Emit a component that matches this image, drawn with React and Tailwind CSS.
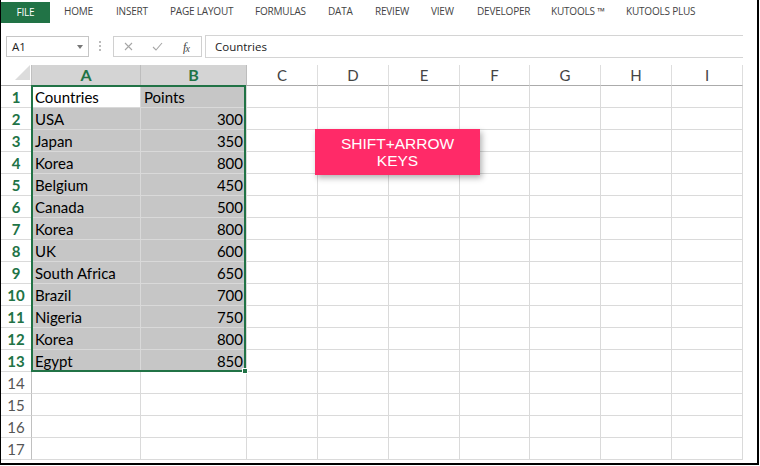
import React from 'react'

const tabs = [
  { label: 'HOME', w: 'w-[52px]' },
  { label: 'INSERT', w: 'w-[54px]' },
  { label: 'PAGE LAYOUT', w: 'w-[85px]' },
  { label: 'FORMULAS', w: 'w-[73px]' },
  { label: 'DATA', w: 'w-[47px]' },
  { label: 'REVIEW', w: 'w-[56px]' },
  { label: 'VIEW', w: 'w-[46px]' },
  { label: 'DEVELOPER', w: 'w-[74px]' },
  { label: 'KUTOOLS ™', w: 'w-[75px]' },
  { label: 'KUTOOLS PLUS', w: 'w-[80px]' },
]

const cols = ['A', 'B', 'C', 'D', 'E', 'F', 'G', 'H', 'I']

const data = [
  ['Countries', 'Points'],
  ['USA', 300],
  ['Japan', 350],
  ['Korea', 800],
  ['Belgium', 450],
  ['Canada', 500],
  ['Korea', 800],
  ['UK', 600],
  ['South Africa', 650],
  ['Brazil', 700],
  ['Nigeria', 750],
  ['Korea', 800],
  ['Egypt', 850],
]

const gridCols = 'grid grid-cols-[31px_109px_106px_71px_71px_71px_70px_71px_71px_71px]'

function Ribbon() {
  return (
    <div className="flex h-[23px] items-stretch font-['Open_Sans',sans-serif] text-[10px] tracking-[-0.2px] text-[#444]">
      <div className="w-[49px] mt-[2px] bg-[#217346] text-white flex items-center justify-center">FILE</div>
      <div className="w-[14px]" />
      {tabs.map(t => (
        <div key={t.label} className={`${t.w} flex items-center whitespace-nowrap`}>{t.label}</div>
      ))}
    </div>
  )
}

function FormulaBar() {
  return (
    <div className="mt-[12px] flex h-[23px] items-start font-['Open_Sans',sans-serif] text-[11.5px] text-[#222]">
      <div className="ml-[5px] mt-[1px] w-[83px] h-[21px] border border-[#c6c6c6] flex items-center justify-between pl-[5px] pr-[5px]">
        <span>A1</span>
        <svg width="6" height="4" viewBox="0 0 6 4"><path d="M0 0h6L3 4z" fill="#777" /></svg>
      </div>
      <div className="ml-[10px] mt-[6px] flex flex-col gap-[2px]">
        <div className="w-[2px] h-[2px] bg-[#bbb]" />
        <div className="w-[2px] h-[2px] bg-[#bbb]" />
        <div className="w-[2px] h-[2px] bg-[#bbb]" />
      </div>
      <div className="ml-[12px] mt-[1px] w-[89px] h-[21px] border border-[#d0d0d0] flex items-center">
        <div className="w-[29px] flex justify-center">
          <svg width="9" height="9" viewBox="0 0 9 9"><path d="M1 1l7 7M8 1L1 8" stroke="#a6a6a6" strokeWidth="1.1" /></svg>
        </div>
        <div className="w-[29px] flex justify-center">
          <svg width="11" height="9" viewBox="0 0 11 9"><path d="M1 5l3 3 6-7" stroke="#a6a6a6" strokeWidth="1.1" fill="none" /></svg>
        </div>
        <div className="w-[29px] flex justify-center font-['Liberation_Serif',serif] italic text-[12px] text-[#444]">
          f<span className="text-[10px] -ml-[1px] mt-[3px]">x</span>
        </div>
      </div>
      <div className="ml-[3px] w-[538px] h-[23px] border border-r-0 border-[#d4d4d4] pl-[9px] flex items-center">Countries</div>
    </div>
  )
}

function Sheet() {
  return (
    <div className="mt-[7px]">
      <div className={`${gridCols} grid-rows-[21px] h-[21px] leading-[18px]`}>
        <div className="border-r border-b border-r-[#c0c0c0] border-b-[#ababab] flex justify-end items-start pr-[1px] overflow-hidden">
          <svg width="15" height="15" viewBox="0 0 15 15"><path d="M15 0v15H0z" fill="#dcdcdc" /></svg>
        </div>
        {cols.map((c, i) => (
          <div
            key={c}
            className={
              i < 2
                ? 'bg-[#d4d4d4] border-r border-b border-r-[#bdbdbd] border-b-[#ababab] flex items-center justify-center text-[16px] font-bold text-[#217346] overflow-hidden'
                : 'border-r border-b border-r-[#dedede] border-b-[#ababab] flex items-center justify-center text-[15px] text-[#444] overflow-hidden'
            }
          >
            {c}
          </div>
        ))}
      </div>
      <div className="relative">
        {Array.from({ length: 17 }, (_, r) => {
          const row = data[r]
          const sel = r < 13
          return (
            <div key={r} className={`${gridCols} grid-rows-[22px] h-[22px] leading-[20px]`}>
              <div
                className={`border-r border-b border-r-[#c0c0c0] border-b-[#dadada] flex items-center justify-center text-[15px] overflow-hidden ${
                  sel ? 'font-bold text-[#217346]' : 'text-[#555]'
                }`}
              >
                {r + 1}
              </div>
              {cols.map((c, i) => {
                const inSel = sel && i < 2
                const bg = inSel && !(r === 0 && i === 0) ? 'bg-[#c6c6c6]' : 'bg-white'
                return (
                  <div
                    key={c}
                    className={`${bg} border-r border-b ${inSel ? 'border-[#d9d9d9]' : 'border-[#dadada]'} flex items-center text-[15px] whitespace-nowrap overflow-hidden ${
                      i === 1 && r > 0 ? 'justify-end pr-[3px]' : 'pl-[3px]'
                    }`}
                  >
                    {row && i < 2 ? row[i] : ''}
                  </div>
                )
              })}
            </div>
          )
        })}
        <div className="absolute left-[30px] top-[-1px] w-[215px] h-[287px] border-2 border-[#217346] pointer-events-none" />
        <div className="absolute left-[241px] top-[282px] w-[6px] h-[6px] bg-[#217346] border border-white" />
        <div className="absolute left-[314px] top-[43px] w-[165px] h-[46px] bg-[#ff2a68] shadow-[2px_3px_6px_rgba(0,0,0,0.3)] flex flex-col items-center justify-center font-['Liberation_Sans',sans-serif] text-[15.5px] leading-[17px] text-white">
          <div>SHIFT+ARROW</div>
          <div>KEYS</div>
        </div>
      </div>
    </div>
  )
}

export default function App() {
  return (
    <div className="w-[759px] h-[465px] bg-white border-l border-r-2 border-b-2 border-black font-['Lato',sans-serif] text-black overflow-hidden">
      <Ribbon />
      <FormulaBar />
      <Sheet />
    </div>
  )
}
